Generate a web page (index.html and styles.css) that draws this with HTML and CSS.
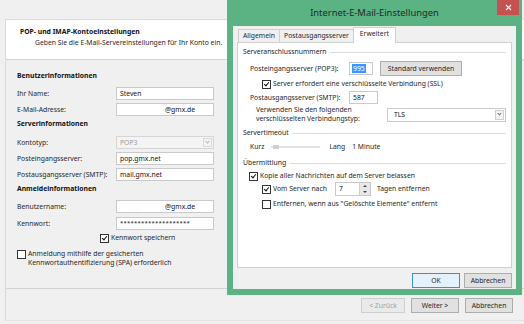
FILE: index.html
```html
<!doctype html>
<html>

<head>
    <meta charset="utf-8" />
    <title>Kontoeinstellungen</title>
    <link rel="stylesheet" href="styles.css">
</head>

<body>
    <div class="wizard">
        <div class="wz-frame">
            <div class="wz-head">
                <div class="wz-title">POP- und IMAP-Kontoeinstellungen</div>
                <div class="wz-sub">Geben Sie die E-Mail-Servereinstellungen für Ihr Konto ein.</div>
            </div>
            <div class="wz-body">
                <div class="sec sec--first">Benutzerinformationen</div>
                <div class="row row--first"><span>Ihr Name:</span><span class="field">Steven</span></div>
                <div class="row"><span>E-Mail-Adresse:</span><span class="field field--mail">@gmx.de</span></div>
                <div class="sec">Serverinformationen</div>
                <div class="row row--sec">
                    <span>Kontotyp:</span>
                    <span class="field field--off">POP3<i class="drop"></i></span>
                </div>
                <div class="row"><span>Posteingangsserver:</span><span class="field">pop.gmx.net</span></div>
                <div class="row"><span>Postausgangsserver (SMTP):</span><span class="field">mail.gmx.net</span></div>
                <div class="sec">Anmeldeinformationen</div>
                <div class="row row--first"><span>Benutzername:</span><span class="field field--mail">@gmx.de</span></div>
                <div class="row row--pw"><span>Kennwort:</span><span class="field field--pw">********************</span></div>
                <div class="check check--save"><i class="box box--on"></i>Kennwort speichern</div>
                <div class="check check--spa">
                    <i class="box"></i>
                    <span>Anmeldung mithilfe der gesicherten<br>Kennwortauthentifizierung (SPA) erforderlich</span>
                </div>
            </div>
            <div class="wz-foot">
                <span class="btn btn--off">&lt; Zurück</span>
                <span class="btn">Weiter &gt;</span>
                <span class="btn btn--last">Abbrechen</span>
            </div>
        </div>
    </div>

    <div class="dlg">
        <div class="dlg__bar">
            Internet-E-Mail-Einstellungen
            <span class="dlg__close">
                <svg width="7" height="7" viewBox="0 0 7 7"><path d="M1 1L6 6M6 1L1 6" stroke="#fff" stroke-width="1.2"/></svg>
            </span>
        </div>
        <div class="dlg__inner">
            <div class="tabs">
                <span class="tab">Allgemein</span>
                <span class="tab">Postausgangsserver</span>
                <span class="tab tab--on">Erweitert</span>
            </div>
            <div class="panel">
                <div class="legend">Serveranschlussnummern</div>
                <div class="prow prow--pop">
                    <span class="plbl">Posteingangsserver (POP3):</span>
                    <span class="inp inp--pop"><b class="sel">995</b></span>
                    <span class="btn btn--std">Standard verwenden</span>
                </div>
                <div class="check check--ssl"><i class="box box--on"></i>Server erfordert eine verschlüsselte Verbindung (SSL)</div>
                <div class="prow prow--smtp">
                    <span class="plbl">Postausgangsserver (SMTP):</span>
                    <span class="inp inp--smtp">587</span>
                </div>
                <div class="prow prow--enc">
                    <span class="plbl plbl--enc">Verwenden Sie den folgenden<br>verschlüsselten Verbindungstyp:</span>
                    <span class="inp inp--tls">TLS<i class="drop"></i></span>
                </div>
                <div class="legend legend--timeout">Servertimeout</div>
                <div class="timeout">
                    <span>Kurz</span>
                    <span class="slider"><i class="thumb"></i></span>
                    <span>Lang</span>
                    <span class="minute">1 Minute</span>
                </div>
                <div class="legend legend--send">Übermittlung</div>
                <div class="check check--keep"><i class="box box--on"></i>Kopie aller Nachrichten auf dem Server belassen</div>
                <div class="check check--days">
                    <i class="box box--on"></i>
                    <span class="days-lbl">Vom Server nach</span>
                    <span class="spin">7<i class="spin__btns"><i class="up"></i><i class="down"></i></i></span>
                    <span>Tagen entfernen</span>
                </div>
                <div class="check check--del"><i class="box"></i>Entfernen, wenn aus "Gelöschte Elemente" entfernt</div>
            </div>
            <div class="dlg__btns">
                <span class="btn btn--ok">OK</span>
                <span class="btn">Abbrechen</span>
            </div>
        </div>
    </div>
</body>

</html>
```

FILE: styles.css
```css
body {
    margin: 0;
    background: #f0f0f0;
    font-family: "Noto Sans", "Open Sans", sans-serif;
    font-size: 6.8px;
    line-height: 12px;
    color: #262626;
}

.wizard {
    padding-top: 19px;
}

.wz-frame {
    margin-left: 5px;
    border-left: 1px solid #d9d9d9;
    border-top: 1px solid #d9d9d9;
    border-bottom: 1px solid #e2e2e2;
    height: 300px;
}

.wz-head {
    height: 39px;
    background: #fff;
    border-bottom: 1px solid #d5d5d5;
}

.wz-title {
    padding: 6px 0 0 14px;
    font-weight: bold;
    line-height: 12px;
    color: #111;
}

.wz-sub {
    padding-left: 29px;
    line-height: 10px;
}

.wz-body {
    height: 228px;
    padding-left: 11px;
    border-bottom: 1px solid #d2d2d2;
}

.sec {
    margin-top: 2px;
    font-weight: bold;
    color: #111;
}

.sec--first {
    padding-top: 10px;
    margin-top: 0;
}

.row {
    display: grid;
    grid-template-columns: 99px 98px;
    align-items: center;
    height: 13px;
    margin-top: 3px;
}

.row--first {
    margin-top: 5px;
}

.row--sec {
    margin-top: 6px;
}

.row--pw {
    margin-top: 4px;
}

.field {
    position: relative;
    height: 11px;
    line-height: 11px;
    padding-left: 3px;
    background: #fff;
    border: 1px solid #c9c9c9;
    color: #111;
}

.field--mail {
    padding-left: 48px;
}

.field--pw {
    font-size: 6px;
    letter-spacing: 0.2px;
}

.field--off {
    background: #f4f4f4;
    border-color: #d6d6d6;
    color: #9a9a9a;
}

.drop {
    position: absolute;
    top: 1px;
    right: 1px;
    width: 9px;
    height: 9px;
    border: 1px solid #d8d8d8;
    box-sizing: border-box;
    background: #f4f4f4;
}

.drop::after {
    content: "";
    position: absolute;
    left: 2px;
    top: 1px;
    width: 2px;
    height: 2px;
    border-right: 1px solid #777;
    border-bottom: 1px solid #777;
    transform: rotate(45deg);
}

.field--off .drop::after {
    border-color: #b5b5b5;
}

.check {
    display: flex;
    align-items: center;
    height: 10px;
}

.check--save {
    margin: 3px 0 0 83px;
}

.check--spa {
    align-items: flex-start;
    margin-top: 6px;
    line-height: 9px;
    height: auto;
}

.check--spa .box {
    margin-top: 1px;
}

.box {
    position: relative;
    flex: none;
    width: 9px;
    height: 9px;
    margin-right: 2px;
    box-sizing: border-box;
    background: #fff;
    border: 1px solid #333;
}

.box--on::after {
    content: "";
    position: absolute;
    left: 2px;
    top: 0;
    width: 2px;
    height: 4px;
    border-right: 1.5px solid #111;
    border-bottom: 1.5px solid #111;
    transform: rotate(40deg);
}

.wz-foot {
    display: flex;
    justify-content: flex-end;
    gap: 6px;
    padding: 9px 11px 0 0;
}

.btn {
    display: inline-block;
    height: 13px;
    line-height: 13px;
    text-align: center;
    background: #e1e1e1;
    border: 1px solid #adadad;
    color: #1e1e1e;
}

.wz-foot .btn {
    width: 46px;
}

.wz-foot .btn--off {
    width: 42px;
    background: #eaeaea;
    border-color: #cfcfcf;
    color: #a2a2a2;
}

.dlg {
    position: absolute;
    left: 227px;
    top: 0;
    width: 295px;
    height: 295px;
    background: #5bb383;
}

.dlg__bar {
    position: relative;
    height: 26px;
    line-height: 26px;
    text-align: center;
    font-size: 9.4px;
    color: #1f2b24;
}

.dlg__close {
    position: absolute;
    top: 0;
    right: 3px;
    width: 22px;
    height: 15px;
    background: #c75050;
    display: flex;
    align-items: center;
    justify-content: center;
}

.dlg__inner {
    height: 263px;
    margin: 0 6px;
    background: #f0f0f0;
}

.tabs {
    display: flex;
    padding: 3px 0 0 5px;
    height: 13px;
}

.tab {
    height: 12px;
    line-height: 12px;
    padding: 0 4px;
    background: #f0f0f0;
    border: 1px solid #d0d0d0;
    border-bottom: 0;
    margin-right: -1px;
}

.tab--on {
    position: relative;
    z-index: 1;
    height: 15px;
    margin-top: -2px;
    padding: 0 6px;
    line-height: 12px;
    background: #fff;
}

.panel {
    height: 221px;
    margin: 0 4px;
    padding: 3px 5px 0;
    background: #fff;
    border: 1px solid #d0d0d0;
}

.legend {
    display: flex;
    align-items: center;
    color: #1a1a1a;
}

.legend::after {
    content: "";
    flex: 1;
    margin-left: 4px;
    border-top: 1px solid #dcdcdc;
}

.legend--timeout {
    margin-top: 4px;
}

.legend--send {
    margin-top: 4px;
}

.prow {
    display: flex;
    align-items: center;
    padding-left: 7px;
}

.plbl {
    width: 99px;
    flex: none;
}

.prow--pop {
    margin-top: 4px;
    height: 13px;
}

.prow--smtp {
    margin-top: 2px;
    height: 13px;
}

.prow--enc {
    align-items: flex-start;
    margin-top: 1px;
    padding-left: 13px;
}

.plbl--enc {
    width: 131px;
    line-height: 9px;
}

.inp {
    position: relative;
    height: 11px;
    line-height: 11px;
    padding-left: 3px;
    box-sizing: content-box;
    background: #fff;
    border: 1px solid #c9c9c9;
    color: #111;
}

.inp--pop {
    width: 20px;
    padding-left: 2px;
}

.inp--smtp {
    width: 24px;
}

.inp--tls {
    width: 115px;
    margin-top: 3px;
    height: 12px;
    line-height: 12px;
    padding-left: 6px;
}

.inp--tls .drop {
    top: 1px;
    height: 10px;
    border-color: #cfcfcf;
}

.sel {
    font-weight: normal;
    background: #3399ff;
    color: #fff;
    padding: 0 1px;
}

.btn--std {
    width: 80px;
    margin-left: 7px;
}

.check--ssl {
    margin: 4px 0 0 19px;
}

.timeout {
    display: flex;
    align-items: center;
    margin-top: 2px;
    padding-left: 7px;
}

.slider {
    position: relative;
    width: 49px;
    height: 2px;
    margin: 0 9px 0 7px;
    background: #e2e2e2;
}

.thumb {
    position: absolute;
    left: 2px;
    top: -1px;
    width: 6px;
    height: 4px;
    background: #cfcfcf;
}

.minute {
    margin-left: 7px;
}

.check--keep {
    margin: 2px 0 0 6px;
}

.check--days {
    height: 14px;
    margin: 1px 0 0 19px;
}

.days-lbl {
    width: 62px;
}

.spin {
    position: relative;
    width: 31px;
    height: 12px;
    line-height: 12px;
    padding-left: 3px;
    margin-right: 6px;
    border: 1px solid #c9c9c9;
    color: #111;
}

.spin__btns {
    position: absolute;
    right: 0;
    top: 0;
    width: 10px;
    height: 12px;
    background: #e8e8e8;
    border-left: 1px solid #d0d0d0;
}

.up,
.down {
    position: absolute;
    left: 3px;
    width: 0;
    height: 0;
    border-left: 2px solid transparent;
    border-right: 2px solid transparent;
}

.up {
    top: 2px;
    border-bottom: 2px solid #444;
}

.down {
    bottom: 2px;
    border-top: 2px solid #444;
}

.check--del {
    margin: 3px 0 0 19px;
}

.dlg__btns {
    display: flex;
    justify-content: flex-end;
    gap: 4px;
    padding: 5px 4px 0 0;
}

.dlg__btns .btn {
    width: 46px;
}

.btn--ok {
    background: #e5f1fb;
    border-color: #3c8fd0;
}
```
